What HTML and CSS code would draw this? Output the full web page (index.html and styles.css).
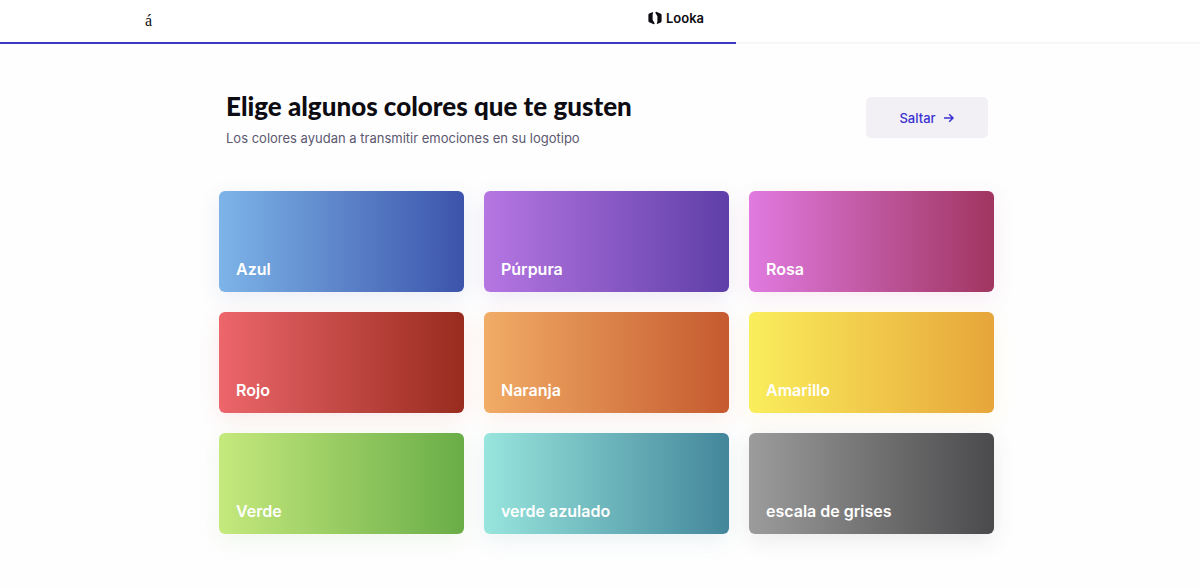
FILE: index.html
```html
<!DOCTYPE html>
<html lang="es">
<head>
<meta charset="utf-8">
<meta name="viewport" content="width=device-width, initial-scale=1">
<title>Looka</title>
<link rel="stylesheet" href="styles.css">
</head>
<body>
<header class="topbar">
  <span class="company">á</span>
  <a class="brand" href="#">
    <svg class="brand-mark" viewBox="0 0 14 14" aria-hidden="true"><path d="M4.4 1.2 1.2 2.6Q.4 3 .4 3.9V10Q.4 10.9 1.2 11.3L5.2 13.1Q6.9 13.7 6.5 12L4.6 8.8V3.6L5.2 1.8Q5.2.9 4.4 1.2ZM9.6 12.8 12.8 11.4Q13.6 11 13.6 10.1V4Q13.6 3.1 12.8 2.7L8.8.9Q7.1.3 7.5 2L9.4 5.2V10.4L8.8 12.2Q8.8 13.1 9.6 12.8Z"/></svg>
    <span>Looka</span>
  </a>
</header>
<div class="track" role="progressbar" aria-label="Progreso" aria-valuenow="61" aria-valuemin="0" aria-valuemax="100"><div class="track-fill" style="width:61.33%"></div></div>
<main class="page">
  <div class="intro">
    <div>
      <h1 class="title">Elige algunos colores que te gusten</h1>
      <p class="subtitle">Los colores ayudan a transmitir emociones en su logotipo</p>
    </div>
    <button class="skip" type="button">Saltar
      <svg class="arrow" viewBox="0 0 12 12" aria-hidden="true"><path d="M1 6H10M6.2 2.2 10 6 6.2 9.8"/></svg>
    </button>
  </div>
  <div class="swatches">
    <button class="swatch blue" type="button">Azul</button>
    <button class="swatch purple" type="button">Púrpura</button>
    <button class="swatch pink" type="button">Rosa</button>
    <button class="swatch red" type="button">Rojo</button>
    <button class="swatch orange" type="button">Naranja</button>
    <button class="swatch yellow" type="button">Amarillo</button>
    <button class="swatch green" type="button">Verde</button>
    <button class="swatch teal" type="button">verde azulado</button>
    <button class="swatch gray" type="button">escala de grises</button>
  </div>
</main>
</body>
</html>
```
FILE: styles.css
```css
* { box-sizing: border-box; }
body {
  margin: 0;
  background: #fefefe;
  color: #0d0c12;
  font-family: Inter, "Open Sans", sans-serif;
}
.topbar {
  display: grid;
  grid-template-columns: 54% 1fr;
  align-items: start;
  min-height: 42px;
  background: #fff;
}
.company {
  padding: 11px 0 0 145px;
  font-family: "Liberation Serif", serif;
  font-size: 16px;
  line-height: 20px;
}
.brand {
  display: flex;
  align-items: center;
  gap: 4px;
  padding-top: 9px;
  color: #0d0c12;
  font-size: 13px;
  font-weight: 600;
  line-height: 18px;
  text-decoration: none;
}
.brand-mark { width: 14px; height: 14px; fill: #0d0c12; }
.track { height: 2px; background: #f7f7f9; }
.track-fill { height: 2px; background: #3b38c8; }
.page {
  width: 100%;
  max-width: 828px;
  margin: 0 auto;
  padding: 46px 20px 54px 33px;
}
.intro {
  display: flex;
  justify-content: space-between;
  align-items: flex-start;
  gap: 20px;
  padding: 0 6px 0 7px;
  margin-bottom: 44px;
}
.title { margin: 0; font-family: Lato, Inter, sans-serif; font-size: 26px; line-height: 32px; font-weight: 900; }
.subtitle { margin: 7px 0 0; color: #5b5870; font-size: 13px; line-height: 18px; }
.skip {
  display: flex;
  align-items: center;
  justify-content: center;
  gap: 7px;
  width: 122px;
  height: 41px;
  margin-top: 7px;
  border: 0;
  border-radius: 5px;
  background: #f2f0f4;
  color: #3a32d2;
  font: 500 13px/18px Inter, "Open Sans", sans-serif;
}
.arrow { width: 12px; height: 12px; fill: none; stroke: currentColor; stroke-width: 1.5; }
.swatches {
  display: grid;
  grid-template-columns: repeat(auto-fit, minmax(220px, 1fr));
  gap: 20px;
}
.swatch {
  display: flex;
  align-items: flex-end;
  min-height: 101px;
  padding: 13px 17px;
  border: 0;
  border-radius: 6px;
  color: #fff;
  font: 600 16px/20px Inter, "Open Sans", sans-serif;
}
.blue { background: linear-gradient(90deg, #7db4e8, #3c54ab); box-shadow: 0 6px 22px #3c54ab1a; }
.purple { background: linear-gradient(90deg, #b676e2, #5f3fa8); box-shadow: 0 6px 22px #5f3fa81a; }
.pink { background: linear-gradient(90deg, #e07ae0, #a03560); box-shadow: 0 6px 22px #c03d901a; }
.red { background: linear-gradient(90deg, #ec666b, #982b1e); box-shadow: 0 6px 22px #e03c301a; }
.orange { background: linear-gradient(90deg, #f1ac66, #c55a2f); box-shadow: 0 6px 22px #e8703a1a; }
.yellow { background: linear-gradient(90deg, #faee5c, #e7a53a); box-shadow: 0 6px 22px #f0c8301a; }
.green { background: linear-gradient(90deg, #c5e97d, #69ad47); box-shadow: 0 6px 22px #69ad471a; }
.teal { background: linear-gradient(90deg, #98e5dd, #43869b); box-shadow: 0 6px 22px #43869b1a; }
.gray { background: linear-gradient(90deg, #9c9c9c, #4a494b); box-shadow: 0 6px 22px #4a494b1a; }
```
